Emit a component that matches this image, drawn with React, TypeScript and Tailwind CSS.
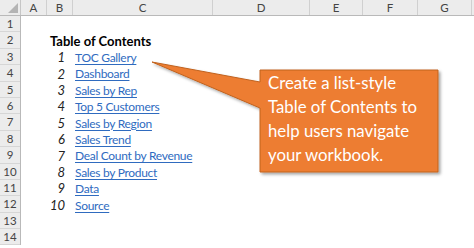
const columns = [
  { label: 'A', width: 'w-[26px]' },
  { label: 'B', width: 'w-[26px]' },
  { label: 'C', width: 'w-[140px]' },
  { label: 'D', width: 'w-[97px]' },
  { label: 'E', width: 'w-[53px]' },
  { label: 'F', width: 'w-[55px]' },
  { label: 'G', width: 'w-[54px]' },
]

const tocItems = [
  'TOC Gallery',
  'Dashboard',
  'Sales by Rep',
  'Top 5 Customers',
  'Sales by Region',
  'Sales Trend',
  'Deal Count by Revenue',
  'Sales by Product',
  'Data',
  'Source',
]

const rowNumbers = Array.from({ length: 14 }, (_, i) => i + 1)

const Callout = () => {
  return (
    <div className="pointer-events-none absolute left-0 top-0 h-[248px] w-[474px]">
      <svg className="absolute left-0 top-0" width="474" height="248" viewBox="0 0 474 248">
        <defs>
          <filter id="shadow" x="-10%" y="-10%" width="130%" height="130%">
            <feDropShadow dx="2" dy="2" stdDeviation="1.5" floodColor="#000" floodOpacity="0.35" />
          </filter>
        </defs>
        <path
          d="M260 70 H438 V172 H260 V108 L152 62 L260 82 Z"
          fill="#ed7d31"
          stroke="#c0621f"
          strokeWidth="1"
          filter="url(#shadow)"
        />
      </svg>
      <div className="absolute left-[268px] top-[71px] font-['Lato',sans-serif] text-[16.8px] leading-[24px] text-white">
        <p>Create a list-style</p>
        <p>Table of Contents to</p>
        <p>help users navigate</p>
        <p>your workbook.</p>
      </div>
    </div>
  )
}

export default function App() {
  return (
    <div className="relative h-[248px] w-[474px] overflow-hidden bg-white font-['Lato',sans-serif]">
      <div className="flex h-[16px] border-b border-[#b9b9b9] bg-[#ececec]">
        <div className="relative w-[21px] shrink-0 border-r border-[#c6c6c6]">
          <div className="absolute bottom-[2px] right-[2px] h-0 w-0 border-b-[10px] border-l-[10px] border-b-[#b4b4b4] border-l-transparent" />
        </div>
        {columns.map((col) => (
          <div
            key={col.label}
            className={`${col.width} flex shrink-0 items-center justify-center border-r border-[#d0d0d0] text-[11.5px] text-[#444]`}
          >
            {col.label}
          </div>
        ))}
        <div className="flex-1" />
      </div>

      <div className="flex">
        <div className="w-[21px] shrink-0 border-r border-[#b9b9b9] bg-[#ececec]">
          {rowNumbers.map((n) => (
            <div
              key={n}
              className="flex h-[16.4px] items-center justify-center border-b border-[#d6d6d6] text-[11.5px] text-[#444]"
            >
              {n}
            </div>
          ))}
        </div>

        <div className="flex-1">
          <div className="h-[16.4px]" />
          <div className="flex h-[16.4px] items-center pl-[29px] pt-[2px] text-[13px] font-bold text-black">
            Table of Contents
          </div>
          {tocItems.map((item, i) => (
            <div key={item} className="flex h-[16.4px] items-center pt-[2px]">
              <span className="w-[48px] pr-[4px] text-right text-[13px] italic text-[#222]">{i + 1}</span>
              <span className="pl-[6px] text-[12px] tracking-[-0.3px] text-[#2f6bbf] underline decoration-[1px] underline-offset-[2px]">
                {item}
              </span>
            </div>
          ))}
        </div>
      </div>

      <Callout />
    </div>
  )
}
